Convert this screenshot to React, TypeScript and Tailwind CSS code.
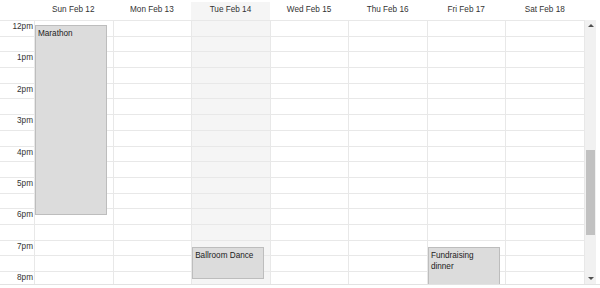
import React from 'react';

const days = ['Sun Feb 12', 'Mon Feb 13', 'Tue Feb 14', 'Wed Feb 15', 'Thu Feb 16', 'Fri Feb 17', 'Sat Feb 18'];
const hours = ['12pm', '1pm', '2pm', '3pm', '4pm', '5pm', '6pm', '7pm', '8pm'];
const TODAY = 2;

type CalEvent = { day: number; title: string; top: number; height: number };

const events: CalEvent[] = [
  { day: 0, title: 'Marathon', top: 5, height: 190 },
  { day: 2, title: 'Ballroom Dance', top: 227, height: 32 },
  { day: 5, title: 'Fundraising dinner', top: 227, height: 60 },
];

const Rows: React.FC = () => (
  <>
    {Array.from({ length: 17 }).map((_, i) => (
      <div key={i} className="h-[15.7px] border-t border-[#e8e8e8]" />
    ))}
  </>
);

const App: React.FC = () => {
  return (
    <div
      className="w-[600px] h-[288px] bg-white overflow-hidden text-[#333] text-[8.2px]"
      style={{ fontFamily: '"Liberation Sans", Arial, sans-serif' }}
    >
      {/* Header */}
      <div className="flex h-[20px] w-[584px]">
        <div className="w-[34px] shrink-0" />
        {days.map((d, i) => (
          <div
            key={d}
            className={`flex-1 flex items-center justify-center ${
              i === TODAY ? 'mt-[2px] pb-[2px] bg-[#f5f5f5]' : ''
            }`}
          >
            {d}
          </div>
        ))}
      </div>

      {/* Body */}
      <div className="flex h-[264px] overflow-hidden">
        <div className="flex w-[585px] shrink-0 border-r border-[#e8e8e8]">
          {/* Time gutter */}
          <div className="w-[34px] shrink-0 relative">
            <Rows />
            {hours.map((h, i) => (
              <div
                key={h}
                className="absolute right-[1px] leading-[10px]"
                style={{ top: i * 31.4 + 2 }}
              >
                {h}
              </div>
            ))}
          </div>

          {days.map((d, i) => (
            <div
              key={d}
              className={`flex-1 relative border-l border-[#e8e8e8] ${i === TODAY ? 'bg-[#f5f5f5]' : ''}`}
            >
              <Rows />
              {events
                .filter((e) => e.day === i)
                .map((e) => (
                  <div
                    key={e.title}
                    className="absolute left-0 w-[72px] bg-[#dcdcdc] border border-[#bdbdbd] px-[2px] pt-[2px] leading-[11px] text-[#222]"
                    style={{ top: e.top, height: e.height }}
                  >
                    {e.title}
                  </div>
                ))}
            </div>
          ))}
        </div>

        {/* Scrollbar */}
        <div className="w-[11px] shrink-0 bg-[#f1f1f1] relative">
          <div className="absolute top-[4px] left-[3px] w-0 h-0 border-l-[3px] border-r-[3px] border-b-[3px] border-l-transparent border-r-transparent border-b-[#505050]" />
          <div className="absolute top-[130px] left-[1px] w-[9px] h-[85px] bg-[#c1c1c1]" />
          <div className="absolute bottom-[4px] left-[3px] w-0 h-0 border-l-[3px] border-r-[3px] border-t-[3px] border-l-transparent border-r-transparent border-t-[#505050]" />
        </div>
      </div>
      <div className="h-[1px] bg-[#e2e2e2]" />
    </div>
  );
};

export default App;
